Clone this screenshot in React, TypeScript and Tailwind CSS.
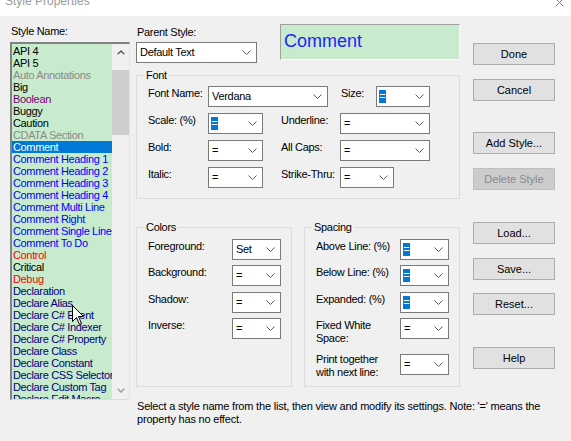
import React from "react";

const items: [string, string][] = [
  ["API 4", "text-black"],
  ["API 5", "text-black"],
  ["Auto Annotations", "text-[#8a8a8a]"],
  ["Big", "text-black"],
  ["Boolean", "text-[#800080]"],
  ["Buggy", "text-black"],
  ["Caution", "text-black"],
  ["CDATA Section", "text-[#8a8a8a]"],
  ["Comment", "sel"],
  ["Comment Heading 1", "text-[#0000ff]"],
  ["Comment Heading 2", "text-[#0000ff]"],
  ["Comment Heading 3", "text-[#0000ff]"],
  ["Comment Heading 4", "text-[#0000ff]"],
  ["Comment Multi Line", "text-[#0000ff]"],
  ["Comment Right", "text-[#0000ff]"],
  ["Comment Single Line", "text-[#0000ff]"],
  ["Comment To Do", "text-[#0000ff]"],
  ["Control", "text-[#ff0000]"],
  ["Critical", "text-black"],
  ["Debug", "text-[#ff0000]"],
  ["Declaration", "text-[#000080]"],
  ["Declare Alias", "text-[#000080]"],
  ["Declare C# Event", "text-[#000080]"],
  ["Declare C# Indexer", "text-[#000080]"],
  ["Declare C# Property", "text-[#000080]"],
  ["Declare Class", "text-[#000080]"],
  ["Declare Constant", "text-[#000080]"],
  ["Declare CSS Selector", "text-[#000080]"],
  ["Declare Custom Tag", "text-[#000080]"],
  ["Declare Edit Macro", "text-[#000080]"],
];

function Chevron({ up, color = "#5a5a5a" }: { up?: boolean; color?: string }) {
  return (
    <svg width="9" height="5" viewBox="0 0 9 5" className="shrink-0">
      <polyline
        points={up ? "0.5,4.5 4.5,0.5 8.5,4.5" : "0.5,0.5 4.5,4.5 8.5,0.5"}
        fill="none"
        stroke={color}
        strokeWidth="1"
      />
    </svg>
  );
}

function Sel({ w, value, hl }: { w: string; value?: string; hl?: boolean }) {
  return (
    <div
      className={`${w} h-[21px] shrink-0 bg-white border border-[#7a7a7a] flex items-center pl-[2px] pr-[5px]`}
    >
      {hl ? (
        <span className="bg-[#0078d7] text-white h-[13px] w-[7px] flex items-center justify-center tracking-normal">
          =
        </span>
      ) : (
        <span className="pl-[1px]">{value}</span>
      )}
      <span className="ml-auto flex">
        <Chevron />
      </span>
    </div>
  );
}

function Btn({ label, disabled, mt }: { label: string; disabled?: boolean; mt: string }) {
  return (
    <div
      className={`${mt} h-[22px] flex items-center justify-center border tracking-normal ${
        disabled
          ? "bg-[#cccccc] border-[#bfbfbf] text-[#8a8a8a]"
          : "bg-[#e1e1e1] border-[#adadad] text-black"
      }`}
    >
      {label}
    </div>
  );
}

function Group({
  title,
  className,
  children,
}: {
  title: string;
  className: string;
  children: React.ReactNode;
}) {
  return (
    <div className={`relative border border-[#dcdcdc] ${className}`}>
      <span className="absolute -top-[7px] left-[7px] px-[2px] bg-[#f0f0f0]">{title}</span>
      {children}
    </div>
  );
}

export default function App() {
  return (
    <div className="w-[571px] h-[441px] bg-[#f0f0f0] overflow-hidden relative text-[11px] leading-[13px] text-black font-['Liberation_Sans',Arial,sans-serif] tracking-[-0.3px]">
      {/* title bar */}
      <div className="h-[16px] bg-white flex overflow-hidden">
        <span className="ml-[5px] mt-[-6px] text-[12px] leading-[14px] text-[#9a9a9a] tracking-normal">
          Style Properties
        </span>
        <svg width="9" height="9" viewBox="0 0 9 9" className="ml-auto mr-[7px] mt-[-2px]">
          <line x1="0.5" y1="0.5" x2="8.5" y2="8.5" stroke="#7a7a7a" strokeWidth="1" />
          <line x1="8.5" y1="0.5" x2="0.5" y2="8.5" stroke="#7a7a7a" strokeWidth="1" />
        </svg>
      </div>

      <div className="flex">
        {/* left column */}
        <div className="ml-[10px] w-[120px] flex flex-col">
          <div className="mt-[9px] pl-[1px]">Style Name:</div>
          <div className="mt-[4px] h-[358px] flex border-t-2 border-l-2 border-r border-b border-t-[#828282] border-l-[#828282] border-r-[#e3e3e3] border-b-[#dcdcdc] bg-[#c7ebcc]">
            <div className="w-[100px] overflow-hidden pt-[1px] text-[11px] leading-[12px] tracking-[-0.35px]">
              {items.map(([name, cls]) =>
                cls === "sel" ? (
                  <div key={name} className="h-[12px] bg-[#0078d7] text-white whitespace-nowrap pl-[1px]">
                    {name}
                  </div>
                ) : (
                  <div key={name} className={`h-[12px] whitespace-nowrap pl-[1px] ${cls}`}>
                    {name}
                  </div>
                )
              )}
            </div>
            <div className="w-[17px] bg-[#f0f0f0] flex flex-col">
              <div className="h-[17px] flex items-center justify-center">
                <svg width="8" height="5" viewBox="0 0 8 5">
                  <polyline points="0.7,4.3 4,1 7.3,4.3" fill="none" stroke="#606060" strokeWidth="1.5" />
                </svg>
              </div>
              <div className="mt-[9px] h-[65px] bg-[#cdcdcd]"></div>
              <div className="mt-auto h-[17px] flex items-center justify-center">
                <svg width="8" height="5" viewBox="0 0 8 5">
                  <polyline points="0.7,0.7 4,4 7.3,0.7" fill="none" stroke="#a0a0a0" strokeWidth="1.5" />
                </svg>
              </div>
            </div>
          </div>
        </div>

        {/* middle column */}
        <div className="ml-[6px] w-[324px] flex flex-col pt-[8px]">
          <div className="flex">
            <div className="w-[144px] pt-[2px]">
              <div className="pl-[1px]">Parent Style:</div>
              <div className="mt-[3px]">
                <Sel w="w-[121px]" value="Default Text" />
              </div>
            </div>
            <div className="w-[180px] h-[36px] bg-[#c7ebcc] border-t border-l border-t-[#a0a0a0] border-l-[#a0a0a0] border-r border-b border-r-white border-b-white flex items-center pl-[3px] pb-[2px]">
              <span className="text-[18px] leading-[20px] text-[#1e1eff] tracking-normal">Comment</span>
            </div>
          </div>

          <Group title="Font" className="mt-[12px] pt-[10px] pb-[10px] pl-[11px]">
            <div className="flex items-start h-[21px]">
              <div className="w-[60px] pt-[1px]">Font Name:</div>
              <Sel w="w-[120px]" value="Verdana" />
              <div className="ml-[13px] w-[35px] pt-[1px]">Size:</div>
              <Sel w="w-[54px]" hl />
            </div>
            <div className="flex items-start h-[21px] mt-[6px]">
              <div className="w-[60px] pt-[1px]">Scale: (%)</div>
              <Sel w="w-[55px]" hl />
              <div className="ml-[18px] w-[59px] pt-[1px]">Underline:</div>
              <Sel w="w-[90px]" value="=" />
            </div>
            <div className="flex items-start h-[21px] mt-[6px]">
              <div className="w-[60px] pt-[1px]">Bold:</div>
              <Sel w="w-[55px]" value="=" />
              <div className="ml-[18px] w-[59px] pt-[1px]">All Caps:</div>
              <Sel w="w-[90px]" value="=" />
            </div>
            <div className="flex items-start h-[21px] mt-[6px]">
              <div className="w-[60px] pt-[1px]">Italic:</div>
              <Sel w="w-[55px]" value="=" />
              <div className="ml-[18px] w-[59px] pt-[1px]">Strike-Thru:</div>
              <Sel w="w-[54px]" value="=" />
            </div>
          </Group>

          <div className="flex mt-[28px] gap-[12px]">
            <Group title="Colors" className="w-[156px] h-[160px] pt-[11px] pl-[11px]">
              <div className="flex items-start h-[21px]">
                <div className="w-[84px] pt-[1px]">Foreground:</div>
                <Sel w="w-[49px]" value="Set" />
              </div>
              <div className="flex items-start h-[21px] mt-[5px]">
                <div className="w-[84px] pt-[1px]">Background:</div>
                <Sel w="w-[49px]" value="=" />
              </div>
              <div className="flex items-start h-[21px] mt-[6px]">
                <div className="w-[84px] pt-[1px]">Shadow:</div>
                <Sel w="w-[49px]" value="=" />
              </div>
              <div className="flex items-start h-[21px] mt-[5px]">
                <div className="w-[84px] pt-[1px]">Inverse:</div>
                <Sel w="w-[49px]" value="=" />
              </div>
            </Group>
            <Group title="Spacing" className="w-[156px] h-[160px] pt-[11px] pl-[11px]">
              <div className="flex items-start h-[21px]">
                <div className="w-[84px] pt-[1px]">Above Line: (%)</div>
                <Sel w="w-[49px]" hl />
              </div>
              <div className="flex items-start h-[21px] mt-[5px]">
                <div className="w-[84px] pt-[1px]">Below Line: (%)</div>
                <Sel w="w-[49px]" hl />
              </div>
              <div className="flex items-start h-[21px] mt-[6px]">
                <div className="w-[84px] pt-[1px]">Expanded: (%)</div>
                <Sel w="w-[49px]" hl />
              </div>
              <div className="flex items-start h-[21px] mt-[5px]">
                <div className="w-[84px] pt-[1px]">
                  Fixed White
                  <br />
                  Space:
                </div>
                <Sel w="w-[49px]" value="=" />
              </div>
              <div className="flex items-start h-[21px] mt-[15px]">
                <div className="w-[84px] pt-[1px] mt-[-2px]">
                  Print together
                  <br />
                  with next line:
                </div>
                <Sel w="w-[49px]" value="=" />
              </div>
            </Group>
          </div>

          <div className="mt-[13px] pl-[1px] whitespace-nowrap tracking-[-0.2px]">
            Select a style name from the list, then view and modify its settings. Note: '=' means the
            <br />
            property has no effect.
          </div>
        </div>

        {/* right column */}
        <div className="ml-[13px] w-[82px] flex flex-col pt-[27px]">
          <Btn label="Done" mt="mt-0" />
          <Btn label="Cancel" mt="mt-[14px]" />
          <Btn label="Add Style..." mt="mt-[31px]" />
          <Btn label="Delete Style" mt="mt-[14px]" disabled />
          <Btn label="Load..." mt="mt-[32px]" />
          <Btn label="Save..." mt="mt-[14px]" />
          <Btn label="Reset..." mt="mt-[13px]" />
          <Btn label="Help" mt="mt-[32px]" />
        </div>
      </div>

      {/* mouse cursor */}
      <svg
        width="13"
        height="21"
        viewBox="0 0 13 21"
        className="absolute left-[72px] top-[305px] pointer-events-none"
      >
        <path
          d="M0.5,0.5 L0.5,16.5 L4.5,12.5 L7.5,19.5 L9.5,18.5 L6.5,11.5 L11.5,11.5 Z"
          fill="white"
          stroke="black"
          strokeWidth="1"
        />
      </svg>
    </div>
  );
}
